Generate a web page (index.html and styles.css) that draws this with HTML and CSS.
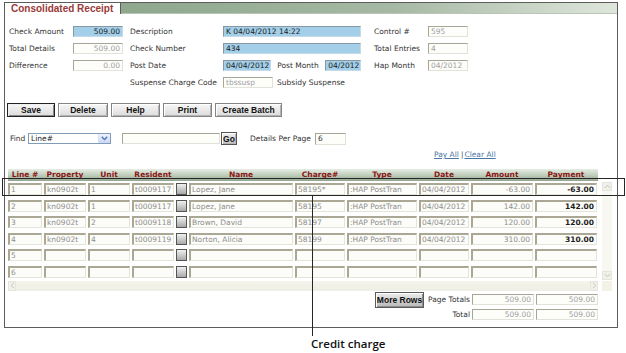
FILE: index.html
```html
<!DOCTYPE html>
<html>
<head>
<meta charset="utf-8">
<link rel="stylesheet" href="styles.css">
</head>
<body>
<div class="page">
  <div class="panel">
    <div class="tabbar">
      <div class="tab">Consolidated Receipt</div>
      <div class="tabfill"></div>
    </div>

    <div class="form">
      <span class="lbl">Check Amount</span>
      <span class="fld blue r">509.00</span>
      <span></span>
      <span class="lbl">Description</span>
      <span class="fld blue">K 04/04/2012 14:22</span>
      <span></span>
      <span class="lbl">Control #</span>
      <span class="fld">595</span>

      <span class="lbl">Total Details</span>
      <span class="fld r">509.00</span>
      <span></span>
      <span class="lbl">Check Number</span>
      <span class="fld blue">434</span>
      <span></span>
      <span class="lbl">Total Entries</span>
      <span class="fld">4</span>

      <span class="lbl">Difference</span>
      <span class="fld r">0.00</span>
      <span></span>
      <span class="lbl">Post Date</span>
      <span class="split">
        <span class="fld blue w50">04/04/2012</span>
        <span class="lbl pm">Post Month</span>
        <span class="fld blue w37">04/2012</span>
      </span>
      <span></span>
      <span class="lbl">Hap Month</span>
      <span class="fld">04/2012</span>

      <span></span>
      <span></span>
      <span></span>
      <span class="lbl">Suspense Charge Code</span>
      <span class="split">
        <span class="fld w50">tbssusp</span>
        <span class="lbl ss">Subsidy Suspense</span>
      </span>
    </div>

    <div class="buttons">
      <span class="btn focus w-save">Save</span>
      <span class="btn w-del">Delete</span>
      <span class="btn w-help">Help</span>
      <span class="btn w-print">Print</span>
      <span class="btn w-cb">Create Batch</span>
    </div>

    <div class="find">
      <span class="lbl findlbl">Find</span>
      <span class="select">
        <span class="selval">Line#</span>
        <span class="selarrow">
          <svg width="7" height="5" viewBox="0 0 7 5"><path d="M0.8 0.8 L3.5 3.6 L6.2 0.8" fill="none" stroke="#4a6cb3" stroke-width="1.3"/></svg>
        </span>
      </span>
      <span class="fld findin"></span>
      <span class="btn go">Go</span>
      <span class="lbl dpp">Details Per Page</span>
      <span class="fld dppin dark">6</span>
    </div>

    <div class="links">
      <a class="lnk">Pay All</a><span class="sep">|</span><a class="lnk">Clear All</a>
    </div>

    <div class="tablearea">
      <div class="thead">
        <span>Line #</span><span>Property</span><span>Unit</span><span>Resident</span><span></span>
        <span>Name</span><span>Charge#</span><span>Type</span><span>Date</span><span>Amount</span><span>Payment</span>
      </div>
      <div class="tcorner-top"></div>

      <div class="tbody">
        <span class="cell">1</span><span class="cell">kn0902t</span><span class="cell">1</span><span class="cell">t0009117</span><span class="look"></span><span class="cell">Lopez, Jane</span><span class="cell">58195*</span><span class="cell">:HAP PostTran</span><span class="cell">04/04/2012</span><span class="cell r">-63.00</span><span class="cell r pay">-63.00</span>

        <span class="cell">2</span><span class="cell">kn0902t</span><span class="cell">1</span><span class="cell">t0009117</span><span class="look"></span><span class="cell">Lopez, Jane</span><span class="cell">58195</span><span class="cell">:HAP PostTran</span><span class="cell">04/04/2012</span><span class="cell r">142.00</span><span class="cell r pay">142.00</span>

        <span class="cell">3</span><span class="cell">kn0902t</span><span class="cell">2</span><span class="cell">t0009118</span><span class="look"></span><span class="cell">Brown, David</span><span class="cell">58197</span><span class="cell">:HAP PostTran</span><span class="cell">04/04/2012</span><span class="cell r">120.00</span><span class="cell r pay">120.00</span>

        <span class="cell">4</span><span class="cell">kn0902t</span><span class="cell">4</span><span class="cell">t0009119</span><span class="look"></span><span class="cell">Norton, Alicia</span><span class="cell">58199</span><span class="cell">:HAP PostTran</span><span class="cell">04/04/2012</span><span class="cell r">310.00</span><span class="cell r pay">310.00</span>

        <span class="cell">5</span><span class="cell"></span><span class="cell"></span><span class="cell"></span><span class="look"></span><span class="cell"></span><span class="cell"></span><span class="cell"></span><span class="cell"></span><span class="cell"></span><span class="cell"></span>

        <span class="cell">6</span><span class="cell"></span><span class="cell"></span><span class="cell"></span><span class="look"></span><span class="cell"></span><span class="cell"></span><span class="cell"></span><span class="cell"></span><span class="cell"></span><span class="cell"></span>
      </div>
      <div class="vscroll">
        <span class="sbtn">
          <svg width="7" height="5" viewBox="0 0 7 5"><path d="M0.8 4 L3.5 1.2 L6.2 4" fill="none" stroke="#c4c4bc" stroke-width="1"/></svg>
        </span>
        <span class="sbtn">
          <svg width="7" height="5" viewBox="0 0 7 5"><path d="M0.8 1 L3.5 3.8 L6.2 1" fill="none" stroke="#c4c4bc" stroke-width="1"/></svg>
        </span>
      </div>

      <div class="hscroll">
        <span class="sbtn h">
          <svg width="5" height="7" viewBox="0 0 5 7"><path d="M4 0.8 L1.2 3.5 L4 6.2" fill="none" stroke="#c4c4bc" stroke-width="1"/></svg>
        </span>
        <span class="sbtn h">
          <svg width="5" height="7" viewBox="0 0 5 7"><path d="M1 0.8 L3.8 3.5 L1 6.2" fill="none" stroke="#c4c4bc" stroke-width="1"/></svg>
        </span>
      </div>
      <div class="corner"></div>
    </div>

    <div class="footer">
      <div class="frow">
        <span class="btn more">More Rows</span>
        <span class="lbl ptl">Page Totals</span>
        <span class="fld r w62">509.00</span>
        <span class="fld r w62">509.00</span>
      </div>
      <div class="frow second">
        <span class="lbl ptl">Total</span>
        <span class="fld r w62">509.00</span>
        <span class="fld r w62">509.00</span>
      </div>
    </div>
  </div>

  <div class="callout-box"></div>
  <div class="callout-line"></div>
  <div class="callout-label">Credit charge</div>
</div>
</body>
</html>
```

FILE: styles.css
```css
body {
  margin: 0;
  background: #ffffff;
  font-family: "DejaVu Sans", Verdana, sans-serif;
  font-size: 7.5px;
  color: #333333;
}

.page {
  position: relative;
  width: 626px;
  height: 353px;
  overflow: hidden;
}

.panel {
  margin: 2px 0 0 4px;
  width: 614px;
  height: 326px;
  box-sizing: border-box;
  border: 1px solid #5c5c5c;
  background: #ffffff;
}

/* tab strip */
.tabbar {
  display: flex;
  height: 11px;
}
.tab {
  width: 116px;
  box-sizing: border-box;
  border-right: 1px solid #5c5c5c;
  padding-left: 6px;
  font-family: "Liberation Sans", Arial, sans-serif;
  font-weight: bold;
  font-size: 10px;
  line-height: 11px;
  color: #9a3a3a;
  white-space: nowrap;
  overflow: hidden;
}
.tabfill {
  flex: 1;
  background: linear-gradient(to right, #8ea78d 0%, #a6b9a4 55%, #dfe6dc 100%);
  border-bottom: 1px solid #b9c6b6;
}

/* header form */
.form {
  margin-top: 12px;
  padding-left: 4px;
  display: grid;
  grid-template-columns: 64px 50px 7px 93px 138px 13px 54px 40px;
  grid-auto-rows: 11px;
  row-gap: 6px;
}
.lbl {
  line-height: 11px;
  white-space: nowrap;
  color: #333333;
}
.fld {
  display: block;
  box-sizing: border-box;
  height: 11px;
  border: 1px solid;
  border-color: #a6a597 #e3e2da #e3e2da #a6a597;
  background: #fdfdfa;
  color: #a0a0a0;
  line-height: 9px;
  padding: 0 2px;
  white-space: nowrap;
  overflow: hidden;
}
.fld.r { text-align: right; }
.fld.blue {
  background: #a3cfe9;
  color: #1c1c1c;
  border-color: #8797a3 #c5dbe9 #c5dbe9 #8797a3;
}
.fld.dark { color: #333333; }
.split {
  display: flex;
  align-items: center;
}
.w50 { width: 50px; }
.w37 { width: 37px; }
.w62 { width: 62px; }
.pm { padding-left: 6px; box-sizing: border-box; width: 56px; }
.ss { padding-left: 4px; }

/* buttons */
.buttons {
  margin-top: 15px;
  padding-left: 2px;
  display: flex;
  gap: 3px;
  height: 14px;
}
.btn {
  display: flex;
  align-items: center;
  justify-content: center;
  box-sizing: border-box;
  height: 14px;
  border: 1px solid #858585;
  background: linear-gradient(#f7f7f7, #dcdcdc);
  box-shadow: inset 1px 1px 0 #ffffff, inset -1px -1px 0 #b4b4b4;
  font-family: "Liberation Sans", Arial, sans-serif;
  font-weight: bold;
  font-size: 8.5px;
  color: #111111;
  white-space: nowrap;
}
.btn.focus {
  border: 1px solid #222222;
  box-shadow: inset 1px 1px 0 #f0f0f0, inset -1px -1px 0 #8a8a8a;
}
.w-save { width: 48px; }
.w-del { width: 50px; }
.w-help { width: 49px; }
.w-print { width: 49px; }
.w-cb { width: 67px; }

/* find row */
.find {
  margin-top: 15px;
  padding-left: 5px;
  display: flex;
  align-items: center;
  height: 13px;
}
.findlbl { width: 18px; }
.select {
  display: flex;
  box-sizing: border-box;
  width: 83px;
  height: 11px;
  border: 1px solid #7f9db9;
  background: #ffffff;
}
.selval {
  flex: 1;
  line-height: 9px;
  padding-left: 2px;
  color: #222222;
}
.selarrow {
  width: 11px;
  display: flex;
  align-items: center;
  justify-content: center;
  background: linear-gradient(#eef3fd, #c9d7f3);
  border-left: 1px solid #d6e0f4;
}
.findin {
  margin-left: 11px;
  width: 98px;
}
.btn.go {
  margin-left: 1px;
  width: 16px;
  height: 13px;
  border-color: #555555;
  background: linear-gradient(#f0f0f0, #c4c4c4);
  font-size: 8.5px;
}
.dpp { margin-left: 13px; width: 65px; }
.dppin { width: 31px; height: 12px; line-height: 10px; }

/* links */
.links {
  margin-top: 5px;
  padding-left: 429px;
  height: 10px;
  line-height: 10px;
  display: flex;
}
.lnk {
  color: #4c76a6;
  text-decoration: underline;
}
.sep {
  color: #555555;
  margin: 0 1px 0 2px;
}

/* table */
.tablearea {
  margin-top: 9px;
  margin-left: 3px;
  display: grid;
  grid-template-columns: 590px 10px;
  column-gap: 4px;
  grid-template-rows: 12px auto 10px;
}
.thead {
  display: grid;
  grid-template-columns: 34px 42px 42px 42px 11px 104px 50px 70px 50px 62px 62px;
  column-gap: 2px;
  height: 12px;
  background: linear-gradient(#e6ede3 0%, #bccbb8 55%, #93a48f 100%);
}
.thead span {
  text-align: center;
  font-weight: bold;
  font-size: 7.5px;
  line-height: 12px;
  color: #8b1616;
  white-space: nowrap;
}
.tbody {
  margin-top: 2px;
  display: grid;
  grid-template-columns: 34px 42px 42px 42px 11px 104px 50px 70px 50px 62px 62px;
  column-gap: 2px;
  grid-auto-rows: 12px;
  row-gap: 4.6px;
  padding-bottom: 3px;
}
.cell {
  display: block;
  box-sizing: border-box;
  height: 12px;
  border-style: solid;
  border-width: 2px 1px 1px 2px;
  border-color: #aaa795 #e5e4db #e5e4db #aaa795;
  background: #fcfcf8;
  color: #8e8e8e;
  line-height: 9px;
  padding: 0 2px 0 1px;
  white-space: nowrap;
  overflow: hidden;
}
.cell.r { text-align: right; }
.cell.pay {
  color: #1e1e1e;
  font-weight: 600;
}
.look {
  display: block;
  box-sizing: border-box;
  height: 12px;
  border: 1px solid #555555;
  background: linear-gradient(#f0f0f0, #a9a9a9);
}
.vscroll {
  margin-top: 1px;
  height: 98px;
  display: flex;
  flex-direction: column;
  justify-content: space-between;
  background: #f8f7f1;
}
.sbtn {
  display: flex;
  align-items: center;
  justify-content: center;
  height: 9px;
  background: #f1f0e9;
  border: 1px solid #e6e5dc;
  box-sizing: border-box;
}
.sbtn.h {
  height: 10px;
  width: 8px;
}
.hscroll {
  display: flex;
  justify-content: space-between;
  height: 10px;
  background: linear-gradient(#f5f4ec, #efeee4);
}
.corner {
  background: #f4f2e4;
}

/* footer */
.footer {
  margin-top: 1px;
  padding-right: 19px;
}
.frow {
  display: flex;
  justify-content: flex-end;
  align-items: center;
  gap: 2px;
  height: 16px;
}
.frow.second {
  margin-top: 1px;
  height: 12px;
}
.btn.more {
  width: 49px;
  height: 16px;
  border-color: #5a5a5a;
  background: linear-gradient(#ececec, #b9b9b9);
  box-shadow: inset 1px 1px 0 #ffffff, inset -1px -1px 0 #8d8d8d;
  margin-right: 2px;
}
.ptl { color: #333333; }

/* callout annotation (overlay) */
.callout-box {
  position: absolute;
  left: 2px;
  top: 178px;
  width: 623px;
  height: 18px;
  box-sizing: border-box;
  border: 1px solid #262626;
}
.callout-line {
  position: absolute;
  left: 312px;
  top: 195px;
  width: 1px;
  height: 141px;
  background: #262626;
}
.callout-label {
  position: absolute;
  left: 311px;
  top: 337px;
  font-family: "Open Sans", "Noto Sans", sans-serif;
  font-weight: 600;
  font-size: 11.5px;
  line-height: 14px;
  color: #111111;
  white-space: nowrap;
}
```
